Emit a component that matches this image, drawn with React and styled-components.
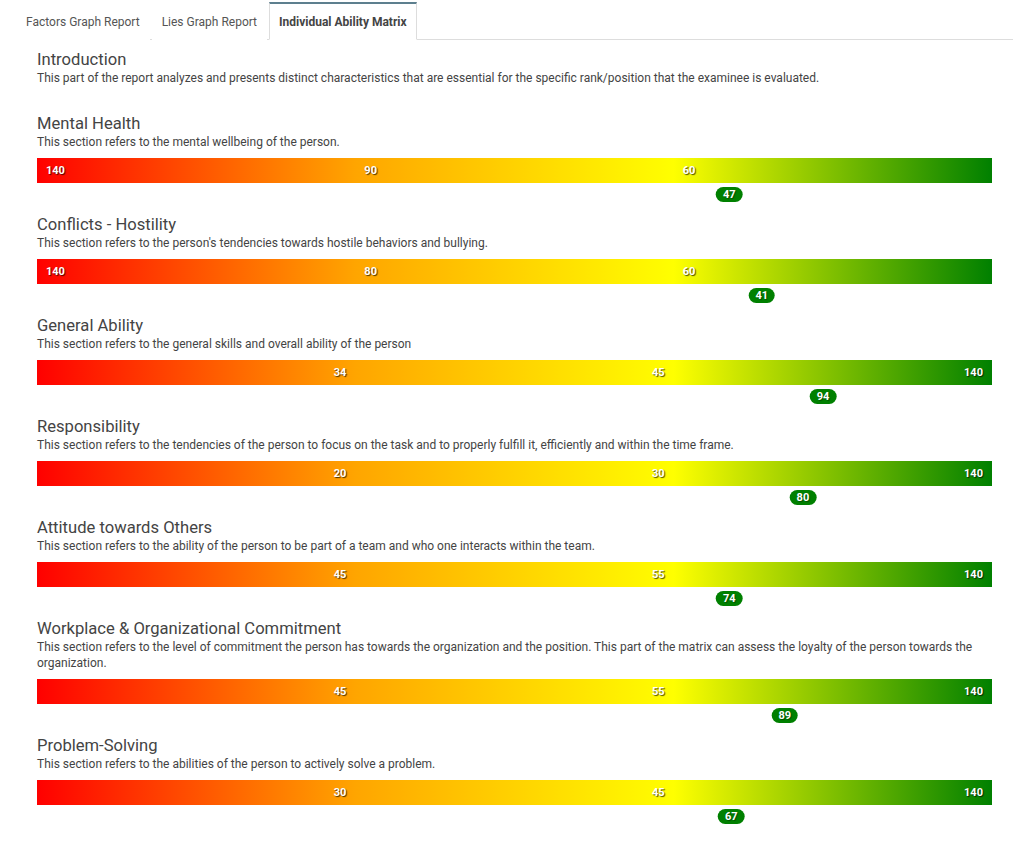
import React from "react";
import styled, { createGlobalStyle } from "styled-components";

const GlobalStyle = createGlobalStyle`
	body {
		margin: 0;
		background: #fff;
		font-family: Roboto, "Liberation Sans", sans-serif;
	}
`;

const sections = [
	{
		title: "Mental Health",
		text: "This section refers to the mental wellbeing of the person.",
		labels: ["140", "90", "60"],
		align: "left",
		value: 47,
		pos: 72.5,
	},
	{
		title: "Conflicts - Hostility",
		text: "This section refers to the person's tendencies towards hostile behaviors and bullying.",
		labels: ["140", "80", "60"],
		align: "left",
		value: 41,
		pos: 75.9,
	},
	{
		title: "General Ability",
		text: "This section refers to the general skills and overall ability of the person",
		labels: ["34", "45", "140"],
		align: "right",
		value: 94,
		pos: 82.3,
	},
	{
		title: "Responsibility",
		text: "This section refers to the tendencies of the person to focus on the task and to properly fulfill it, efficiently and within the time frame.",
		labels: ["20", "30", "140"],
		align: "right",
		value: 80,
		pos: 80.2,
	},
	{
		title: "Attitude towards Others",
		text: "This section refers to the ability of the person to be part of a team and who one interacts within the team.",
		labels: ["45", "55", "140"],
		align: "right",
		value: 74,
		pos: 72.5,
	},
	{
		title: "Workplace & Organizational Commitment",
		text: "This section refers to the level of commitment the person has towards the organization and the position. This part of the matrix can assess the loyalty of the person towards the organization.",
		labels: ["45", "55", "140"],
		align: "right",
		value: 89,
		pos: 78.3,
	},
	{
		title: "Problem-Solving",
		text: "This section refers to the abilities of the person to actively solve a problem.",
		labels: ["30", "45", "140"],
		align: "right",
		value: 67,
		pos: 72.7,
	},
];

const tabs = ["Factors Graph Report", "Lies Graph Report", "Individual Ability Matrix"];

const App = () => {
	return (
		<Page>
			<GlobalStyle />
			<TabBar>
				{tabs.map((t, i) => (
					<Tab key={t} active={i === 2}>
						{t}
					</Tab>
				))}
			</TabBar>
			<Content>
				<Intro>
					<Title>Introduction</Title>
					<Desc>
						This part of the report analyzes and presents distinct characteristics that are
						essential for the specific rank/position that the examinee is evaluated.
					</Desc>
				</Intro>
				{sections.map((s) => (
					<Section key={s.title}>
						<Title>{s.title}</Title>
						<Desc>{s.text}</Desc>
						<Bar>
							{s.labels.map((l, i) => (
								<Segment key={i} align={s.align}>
									{l}
								</Segment>
							))}
						</Bar>
						<MarkerRow>
							<Badge style={{ left: `${s.pos}%` }}>{s.value}</Badge>
						</MarkerRow>
					</Section>
				))}
			</Content>
		</Page>
	);
};

export default App;

const Page = styled.div`
	padding: 2px 17px 0 16px;
`;

const TabBar = styled.div`
	display: flex;
	border-bottom: 1px solid #dddddd;
	height: 37px;
`;

const Tab = styled.div`
	display: flex;
	align-items: center;
	margin-right: 2px;
	margin-bottom: -1px;
	padding: 0 9px;
	font-family: Roboto, "Liberation Sans", sans-serif;
	font-size: 12px;
	color: ${(p) => (p.active ? "#444" : "#555")};
	font-weight: ${(p) => (p.active ? 700 : 400)};
	background: #fff;
	border: 1px solid ${(p) => (p.active ? "#dddddd" : "transparent")};
	border-top: ${(p) => (p.active ? "2px solid #5d7f8e" : "2px solid transparent")};
	border-bottom-color: ${(p) => (p.active ? "#fff" : "transparent")};
`;

const Content = styled.div`
	padding: 10px 21px 20px 21px;
`;

const Intro = styled.div`
	margin-bottom: 28px;
`;

const Section = styled.div`
	margin-bottom: 13px;
`;

const Title = styled.div`
	font-size: 16.6px;
	line-height: 20px;
	color: #444;
`;

const Desc = styled.div`
	font-size: 12px;
	line-height: 16px;
	color: #444;
`;

const Bar = styled.div`
	display: flex;
	margin-top: 8px;
	height: 25px;
	background: linear-gradient(to right, red, orange, yellow, green);
`;

const Segment = styled.div`
	flex: 1;
	display: flex;
	align-items: center;
	justify-content: ${(p) => (p.align === "right" ? "flex-end" : "flex-start")};
	padding: 0 9px;
	font-size: 11px;
	font-weight: 700;
	color: #fff;
	text-shadow: 1px 1px 1px rgba(0, 0, 0, 0.7);
`;

const MarkerRow = styled.div`
	position: relative;
	height: 15px;
	margin-top: 4px;
`;

const Badge = styled.span`
	position: absolute;
	top: 0;
	transform: translateX(-50%);
	height: 15px;
	line-height: 15px;
	padding: 0 7px;
	border-radius: 8px;
	background: green;
	color: #fff;
	font-size: 11px;
	font-weight: 700;
	text-shadow: 1px 1px 1px rgba(0, 0, 0, 0.4);
`;
